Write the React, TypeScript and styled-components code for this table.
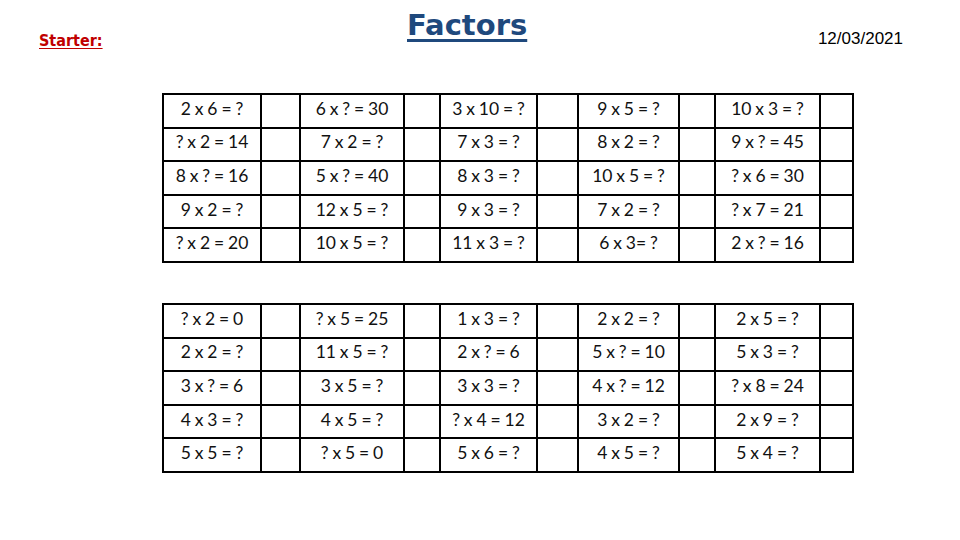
import React from "react";
import styled, { createGlobalStyle } from "styled-components";

const Global = createGlobalStyle`
  html, body { margin: 0; padding: 0; background: #ffffff; }
  body { width: 960px; height: 540px; overflow: hidden; }
`;

const Page = styled.div`
  width: 960px;
  height: 540px;
  background: #ffffff;
  display: flex;
  flex-direction: column;
`;

const Header = styled.header`
  display: grid;
  grid-template-columns: 368px 150px 1fr;
  align-items: start;
  padding: 0 57px 0 39px;
  height: 93px;
`;

const Starter = styled.div`
  margin-top: 31px;
  font-family: "DejaVu Sans Condensed", "DejaVu Sans", sans-serif;
  font-weight: bold;
  font-size: 16px;
  color: #c00000;
  text-decoration: underline;
  text-underline-offset: 2px;
`;

const Title = styled.h1`
  margin: 5px 0 0 0;
  font-family: "DejaVu Sans", sans-serif;
  font-weight: bold;
  font-size: 29px;
  line-height: 40px;
  color: #1f497d;
  text-decoration: underline;
  text-decoration-thickness: 3px;
  text-underline-offset: 4px;
`;

const DateText = styled.div`
  margin-top: 29px;
  justify-self: end;
  font-family: "Liberation Sans", Arial, sans-serif;
  font-size: 17px;
  color: #000;
`;

const Tables = styled.div`
  display: flex;
  flex-direction: column;
  gap: 40px;
  padding-left: 162px;
`;

const Grid = styled.div`
  display: grid;
  width: max-content;
  grid-template-columns: 96px 37px 102px 34px 95px 39px 99px 34px 103px 31px;
  grid-auto-rows: 31.6px;
  gap: 2px;
  padding: 2px;
  background: #000;
`;

const Cell = styled.div`
  background: #fff;
  display: flex;
  align-items: center;
  justify-content: center;
  padding-bottom: 5px;
  box-sizing: border-box;
  font-family: Lato, "Open Sans", sans-serif;
  font-size: 17.5px;
  word-spacing: -0.6px;
  color: #111;
  white-space: pre;
`;

const table1 = [
  ["2 x 6 = ?", "6 x ? = 30", "3 x 10 = ?", "9 x 5 = ?", "10 x 3 = ?"],
  ["? x 2 = 14", "7 x 2 = ?", "7 x 3 = ?", "8 x 2 = ?", "9 x ? = 45"],
  ["8 x ? = 16", "5 x ? = 40", "8 x 3 = ?", "10 x 5 = ?", "? x 6 = 30"],
  ["9 x 2 = ?", "12 x 5 = ?", "9 x 3 = ?", "7 x 2 = ?", "? x 7 = 21"],
  ["? x 2 = 20", "10 x 5 = ?", "11 x 3 = ?", "6 x 3= ?", "2 x ? = 16"],
];

const table2 = [
  ["? x 2 = 0", "? x 5 = 25", "1 x 3 = ?", "2 x 2 = ?", "2 x 5 = ?"],
  ["2 x 2 = ?", "11 x 5 = ?", "2 x ? = 6", "5 x ? = 10", "5 x 3 = ?"],
  ["3 x ? = 6", "3 x 5 = ?", "3 x 3 = ?", "4 x ? = 12", "? x 8 = 24"],
  ["4 x 3 = ?", "4 x 5 = ?", "? x 4 = 12", "3 x 2 = ?", "2 x 9 = ?"],
  ["5 x 5 = ?", "? x 5 = 0", "5 x 6 = ?", "4 x 5 = ?", "5 x 4 = ?"],
];

const QuestionTable: React.FC<{ rows: string[][] }> = ({ rows }) => (
  <Grid>
    {rows.map((row, r) =>
      row.map((q, c) => (
        <React.Fragment key={`${r}-${c}`}>
          <Cell>{q}</Cell>
          <Cell />
        </React.Fragment>
      ))
    )}
  </Grid>
);

export default function App() {
  return (
    <Page>
      <Global />
      <Header>
        <Starter>Starter:</Starter>
        <Title>Factors</Title>
        <DateText>12/03/2021</DateText>
      </Header>
      <Tables>
        <QuestionTable rows={table1} />
        <QuestionTable rows={table2} />
      </Tables>
    </Page>
  );
}
